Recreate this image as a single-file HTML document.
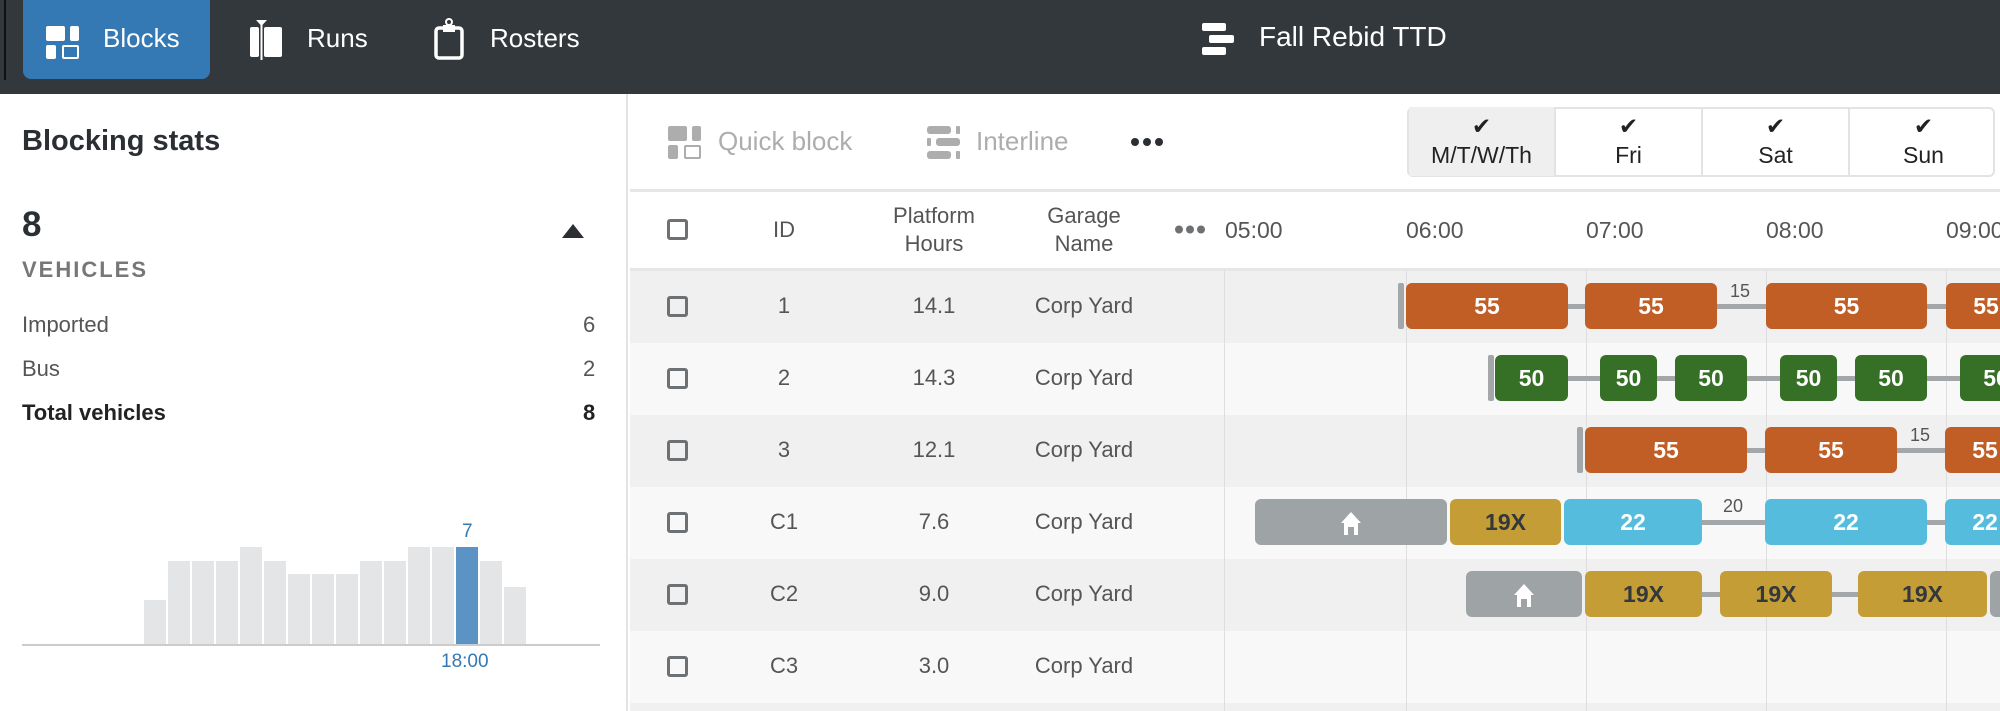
<!DOCTYPE html>
<html style="width:2000px;height:711px;overflow:hidden"><head><meta charset="utf-8"><style>
*{margin:0;padding:0;box-sizing:border-box}
body{width:2000px;height:711px;overflow:hidden;background:#fff;font-family:"Liberation Sans",sans-serif;position:relative;color:#333}
.a{position:absolute;white-space:nowrap}
.hdr{left:0;top:0;width:2000px;height:94px;background:#33383d}
.nav{color:#fff;font-size:26px;top:23px}
.left{left:0;top:94px;width:628px;height:617px;background:#fff;border-right:2px solid #e3e3e3}
.stat{font-size:22px;color:#555}
.bar{position:absolute;background:#e4e5e7;width:22px;bottom:66px}
.row{position:absolute;left:630px;width:1370px;height:72px}
.cell{position:absolute;font-size:22px;color:#555;text-align:center;top:23px}
.cb{position:absolute;left:667px;width:21px;height:21px;border:3px solid #6d7174;border-radius:3px}
.vl{position:absolute;top:270px;height:441px;width:1px;background:#dedede}
.blk{position:absolute;height:46px;border-radius:6px;color:#fff;font-size:23px;font-weight:bold;text-align:center;line-height:46px}
.o{background:#c05e26}.g{background:#367027}.y{background:#c49d36;color:#33383d}.b{background:#56bcdd}.gr{background:#9ea3a6}
.ln{position:absolute;height:5px;background:#a3a7aa}
.mk{position:absolute;width:6px;height:46px;background:#a3a7aa;border-radius:2px}
.sm{position:absolute;font-size:18px;color:#555}
.day{position:absolute;top:107px;width:147px;height:69px;border-right:2px solid #e3e3e3;text-align:center;font-size:23px;color:#222;padding-top:5px;line-height:29px}
</style></head><body>
<div class="a hdr"></div>
<div class="a" style="left:4px;top:0;width:2px;height:80px;background:#111"></div>
<div class="a" style="left:23px;top:0;width:187px;height:79px;background:#3478b4;border-radius:0 0 8px 8px"></div>
<svg class="a" style="left:46px;top:26px" width="33" height="33" viewBox="0 0 33 33"><rect x="0" y="0" width="19" height="15" rx="2" fill="#fff"/><rect x="24" y="0" width="9" height="15" rx="2" fill="#fff"/><rect x="0" y="19" width="10" height="14" rx="2" fill="#fff"/><rect x="17" y="20" width="15" height="12" rx="1" fill="none" stroke="#fff" stroke-width="2"/></svg>
<div class="a nav" style="left:103px">Blocks</div>
<svg class="a" style="left:250px;top:20px" width="32" height="40" viewBox="0 0 32 40"><rect x="0" y="7" width="9" height="30" rx="2" fill="#fff"/><rect x="14" y="7" width="18" height="30" rx="2" fill="#fff"/><rect x="10.5" y="3" width="2" height="37" fill="#fff"/><path d="M6 0h11l-5.5 6z" fill="#fff"/></svg>
<div class="a nav" style="left:307px">Runs</div>
<svg class="a" style="left:434px;top:18px" width="30" height="42" viewBox="0 0 30 42"><rect x="2" y="10" width="26" height="30" rx="3" fill="none" stroke="#fff" stroke-width="3.5"/><rect x="9" y="7" width="12" height="7" fill="#fff"/><circle cx="15" cy="4" r="3" fill="none" stroke="#fff" stroke-width="2"/></svg>
<div class="a nav" style="left:490px">Rosters</div>
<svg class="a" style="left:1202px;top:23px" width="32" height="32" viewBox="0 0 32 32"><rect x="0" y="0" width="24" height="8" rx="2" fill="#fff"/><rect x="7" y="12" width="25" height="8" rx="2" fill="#fff"/><rect x="0" y="24" width="24" height="8" rx="2" fill="#fff"/></svg>
<div class="a nav" style="left:1259px;font-size:28px;top:21px">Fall Rebid TTD</div>

<div class="a left"></div>
<div class="a" style="left:22px;top:125px;font-size:29px;font-weight:bold;color:#2b2f33">Blocking stats</div>
<div class="a" style="left:22px;top:205px;font-size:35px;font-weight:bold;color:#2b2f33">8</div>
<svg class="a" style="left:562px;top:224px" width="22" height="14"><path d="M0 14L11 0L22 14z" fill="#2b2f33"/></svg>
<div class="a" style="left:22px;top:257px;font-size:22px;font-weight:bold;color:#777;letter-spacing:2px">VEHICLES</div>
<div class="a stat" style="left:22px;top:312px">Imported</div><div class="a stat" style="left:583px;top:312px">6</div>
<div class="a stat" style="left:22px;top:356px">Bus</div><div class="a stat" style="left:583px;top:356px">2</div>
<div class="a stat" style="left:22px;top:400px;font-weight:bold;color:#222">Total vehicles</div><div class="a stat" style="left:583px;top:400px;font-weight:bold;color:#222">8</div>
<div class="bar" style="left:144px;height:45px"></div>
<div class="bar" style="left:168px;height:84px"></div>
<div class="bar" style="left:192px;height:84px"></div>
<div class="bar" style="left:216px;height:84px"></div>
<div class="bar" style="left:240px;height:98px"></div>
<div class="bar" style="left:264px;height:84px"></div>
<div class="bar" style="left:288px;height:71px"></div>
<div class="bar" style="left:312px;height:71px"></div>
<div class="bar" style="left:336px;height:71px"></div>
<div class="bar" style="left:360px;height:84px"></div>
<div class="bar" style="left:384px;height:84px"></div>
<div class="bar" style="left:408px;height:98px"></div>
<div class="bar" style="left:432px;height:98px"></div>
<div class="bar" style="left:456px;height:98px;background:#5b93c4"></div>
<div class="bar" style="left:480px;height:84px"></div>
<div class="bar" style="left:504px;height:58px"></div>
<div class="a" style="left:22px;top:644px;width:578px;height:2px;background:#ccc"></div>
<div class="a" style="left:462px;top:521px;font-size:19px;color:#3478b4">7</div>
<div class="a" style="left:441px;top:651px;font-size:19px;color:#3478b4">18:00</div>

<svg class="a" style="left:668px;top:126px" width="33" height="33" viewBox="0 0 33 33"><rect x="0" y="0" width="19" height="15" rx="2" fill="#adadad"/><rect x="24" y="0" width="9" height="15" rx="2" fill="#adadad"/><rect x="0" y="19" width="10" height="14" rx="2" fill="#adadad"/><rect x="17" y="20" width="15" height="12" rx="1" fill="none" stroke="#adadad" stroke-width="2"/></svg>
<div class="a" style="left:718px;top:126px;font-size:26px;color:#adadad">Quick block</div>
<svg class="a" style="left:927px;top:126px" width="33" height="33" viewBox="0 0 33 33"><rect x="0" y="0" width="24" height="8" rx="3" fill="#adadad"/><rect x="29" y="0" width="4" height="8" rx="1" fill="#adadad"/><rect x="0" y="12" width="4" height="8" rx="1" fill="#adadad"/><rect x="9" y="12" width="24" height="8" rx="3" fill="#adadad"/><rect x="0" y="25" width="24" height="8" rx="3" fill="#adadad"/><rect x="29" y="25" width="4" height="8" rx="1" fill="#adadad"/></svg>
<div class="a" style="left:976px;top:126px;font-size:26px;color:#adadad">Interline</div>
<svg class="a" style="left:1131px;top:137px" width="32" height="10"><circle cx="4" cy="5" r="4" fill="#2b2f33"/><circle cx="16" cy="5" r="4" fill="#2b2f33"/><circle cx="28" cy="5" r="4" fill="#2b2f33"/></svg>
<div class="a" style="left:1407px;top:107px;width:588px;height:70px;border:2px solid #e3e3e3;border-radius:6px"></div>
<div class="day" style="left:1409px;background:#efefef">✔<br>M/T/W/Th</div>
<div class="day" style="left:1556px">✔<br>Fri</div>
<div class="day" style="left:1703px">✔<br>Sat</div>
<div class="day" style="left:1850px;border-right:none">✔<br>Sun</div>
<div class="a" style="left:630px;top:189px;width:1370px;height:3px;background:#e6e6e6"></div>

<div class="cb" style="top:219px"></div>
<div class="cell" style="left:754px;width:60px;top:217px">ID</div>
<div class="cell" style="left:874px;width:120px;top:202px;line-height:28px">Platform<br>Hours</div>
<div class="cell" style="left:1024px;width:120px;top:202px;line-height:28px">Garage<br>Name</div>
<svg class="a" style="left:1175px;top:225px" width="30" height="9"><circle cx="4" cy="4.5" r="4" fill="#6d7174"/><circle cx="15" cy="4.5" r="4" fill="#6d7174"/><circle cx="26" cy="4.5" r="4" fill="#6d7174"/></svg>
<div class="a" style="left:1225px;top:217px;font-size:23px;color:#555">05:00</div>
<div class="a" style="left:1406px;top:217px;font-size:23px;color:#555">06:00</div>
<div class="a" style="left:1586px;top:217px;font-size:23px;color:#555">07:00</div>
<div class="a" style="left:1766px;top:217px;font-size:23px;color:#555">08:00</div>
<div class="a" style="left:1946px;top:217px;font-size:23px;color:#555">09:00</div>
<div class="a" style="left:630px;top:268px;width:1370px;height:3px;background:#e6e6e6"></div>

<div class="row" style="top:271px;background:#f0f0f0"></div>
<div class="row" style="top:343px;background:#f8f8f8"></div>
<div class="row" style="top:415px;background:#f0f0f0"></div>
<div class="row" style="top:487px;background:#f8f8f8"></div>
<div class="row" style="top:559px;background:#f0f0f0"></div>
<div class="row" style="top:631px;background:#f8f8f8"></div>
<div class="row" style="top:703px;height:8px;background:#f0f0f0"></div>
<div class="vl" style="left:1224px"></div><div class="vl" style="left:1406px"></div><div class="vl" style="left:1586px"></div><div class="vl" style="left:1766px"></div><div class="vl" style="left:1946px"></div>

<div class="cb" style="top:296px"></div><div class="cell" style="left:754px;width:60px;top:293px">1</div><div class="cell" style="left:874px;width:120px;top:293px">14.1</div><div class="cell" style="left:1024px;width:120px;top:293px">Corp Yard</div>
<div class="cb" style="top:368px"></div><div class="cell" style="left:754px;width:60px;top:365px">2</div><div class="cell" style="left:874px;width:120px;top:365px">14.3</div><div class="cell" style="left:1024px;width:120px;top:365px">Corp Yard</div>
<div class="cb" style="top:440px"></div><div class="cell" style="left:754px;width:60px;top:437px">3</div><div class="cell" style="left:874px;width:120px;top:437px">12.1</div><div class="cell" style="left:1024px;width:120px;top:437px">Corp Yard</div>
<div class="cb" style="top:512px"></div><div class="cell" style="left:754px;width:60px;top:509px">C1</div><div class="cell" style="left:874px;width:120px;top:509px">7.6</div><div class="cell" style="left:1024px;width:120px;top:509px">Corp Yard</div>
<div class="cb" style="top:584px"></div><div class="cell" style="left:754px;width:60px;top:581px">C2</div><div class="cell" style="left:874px;width:120px;top:581px">9.0</div><div class="cell" style="left:1024px;width:120px;top:581px">Corp Yard</div>
<div class="cb" style="top:656px"></div><div class="cell" style="left:754px;width:60px;top:653px">C3</div><div class="cell" style="left:874px;width:120px;top:653px">3.0</div><div class="cell" style="left:1024px;width:120px;top:653px">Corp Yard</div>

<div class="mk" style="left:1398px;top:283px"></div>
<div class="ln" style="left:1568px;top:304px;width:17px"></div>
<div class="ln" style="left:1717px;top:304px;width:49px"></div>
<div class="ln" style="left:1927px;top:304px;width:19px"></div>
<div class="sm" style="left:1730px;top:281px">15</div>
<div class="blk o" style="left:1406px;top:283px;width:162px">55</div>
<div class="blk o" style="left:1585px;top:283px;width:132px">55</div>
<div class="blk o" style="left:1766px;top:283px;width:161px">55</div>
<div class="blk o" style="left:1946px;top:283px;width:80px">55</div>
<div class="mk" style="left:1488px;top:355px"></div>
<div class="ln" style="left:1568px;top:376px;width:32px"></div>
<div class="ln" style="left:1657px;top:376px;width:18px"></div>
<div class="ln" style="left:1747px;top:376px;width:33px"></div>
<div class="ln" style="left:1837px;top:376px;width:18px"></div>
<div class="ln" style="left:1927px;top:376px;width:33px"></div>
<div class="blk g" style="left:1495px;top:355px;width:73px">50</div>
<div class="blk g" style="left:1600px;top:355px;width:57px">50</div>
<div class="blk g" style="left:1675px;top:355px;width:72px">50</div>
<div class="blk g" style="left:1780px;top:355px;width:57px">50</div>
<div class="blk g" style="left:1855px;top:355px;width:72px">50</div>
<div class="blk g" style="left:1960px;top:355px;width:72px">50</div>
<div class="mk" style="left:1577px;top:427px"></div>
<div class="ln" style="left:1747px;top:448px;width:18px"></div>
<div class="ln" style="left:1897px;top:448px;width:48px"></div>
<div class="sm" style="left:1910px;top:425px">15</div>
<div class="blk o" style="left:1585px;top:427px;width:162px">55</div>
<div class="blk o" style="left:1765px;top:427px;width:132px">55</div>
<div class="blk o" style="left:1945px;top:427px;width:80px">55</div>
<div class="ln" style="left:1702px;top:520px;width:63px"></div>
<div class="ln" style="left:1927px;top:520px;width:18px"></div>
<div class="sm" style="left:1723px;top:496px">20</div>
<div class="blk gr" style="left:1255px;top:499px;width:192px"><svg width="26" height="26" viewBox="0 0 26 26" style="vertical-align:middle"><path d="M13 1L3 12h3v12h4v-8h6v8h4V12h3z" fill="#fff"/></svg></div>
<div class="blk y" style="left:1450px;top:499px;width:111px">19X</div>
<div class="blk b" style="left:1564px;top:499px;width:138px">22</div>
<div class="blk b" style="left:1765px;top:499px;width:162px">22</div>
<div class="blk b" style="left:1945px;top:499px;width:80px">22</div>
<div class="ln" style="left:1702px;top:592px;width:18px"></div>
<div class="ln" style="left:1832px;top:592px;width:26px"></div>
<div class="blk gr" style="left:1466px;top:571px;width:116px"><svg width="26" height="26" viewBox="0 0 26 26" style="vertical-align:middle"><path d="M13 1L3 12h3v12h4v-8h6v8h4V12h3z" fill="#fff"/></svg></div>
<div class="blk y" style="left:1585px;top:571px;width:117px">19X</div>
<div class="blk y" style="left:1720px;top:571px;width:112px">19X</div>
<div class="blk y" style="left:1858px;top:571px;width:129px">19X</div>
<div class="blk gr" style="left:1990px;top:571px;width:40px"></div>
</body></html>
